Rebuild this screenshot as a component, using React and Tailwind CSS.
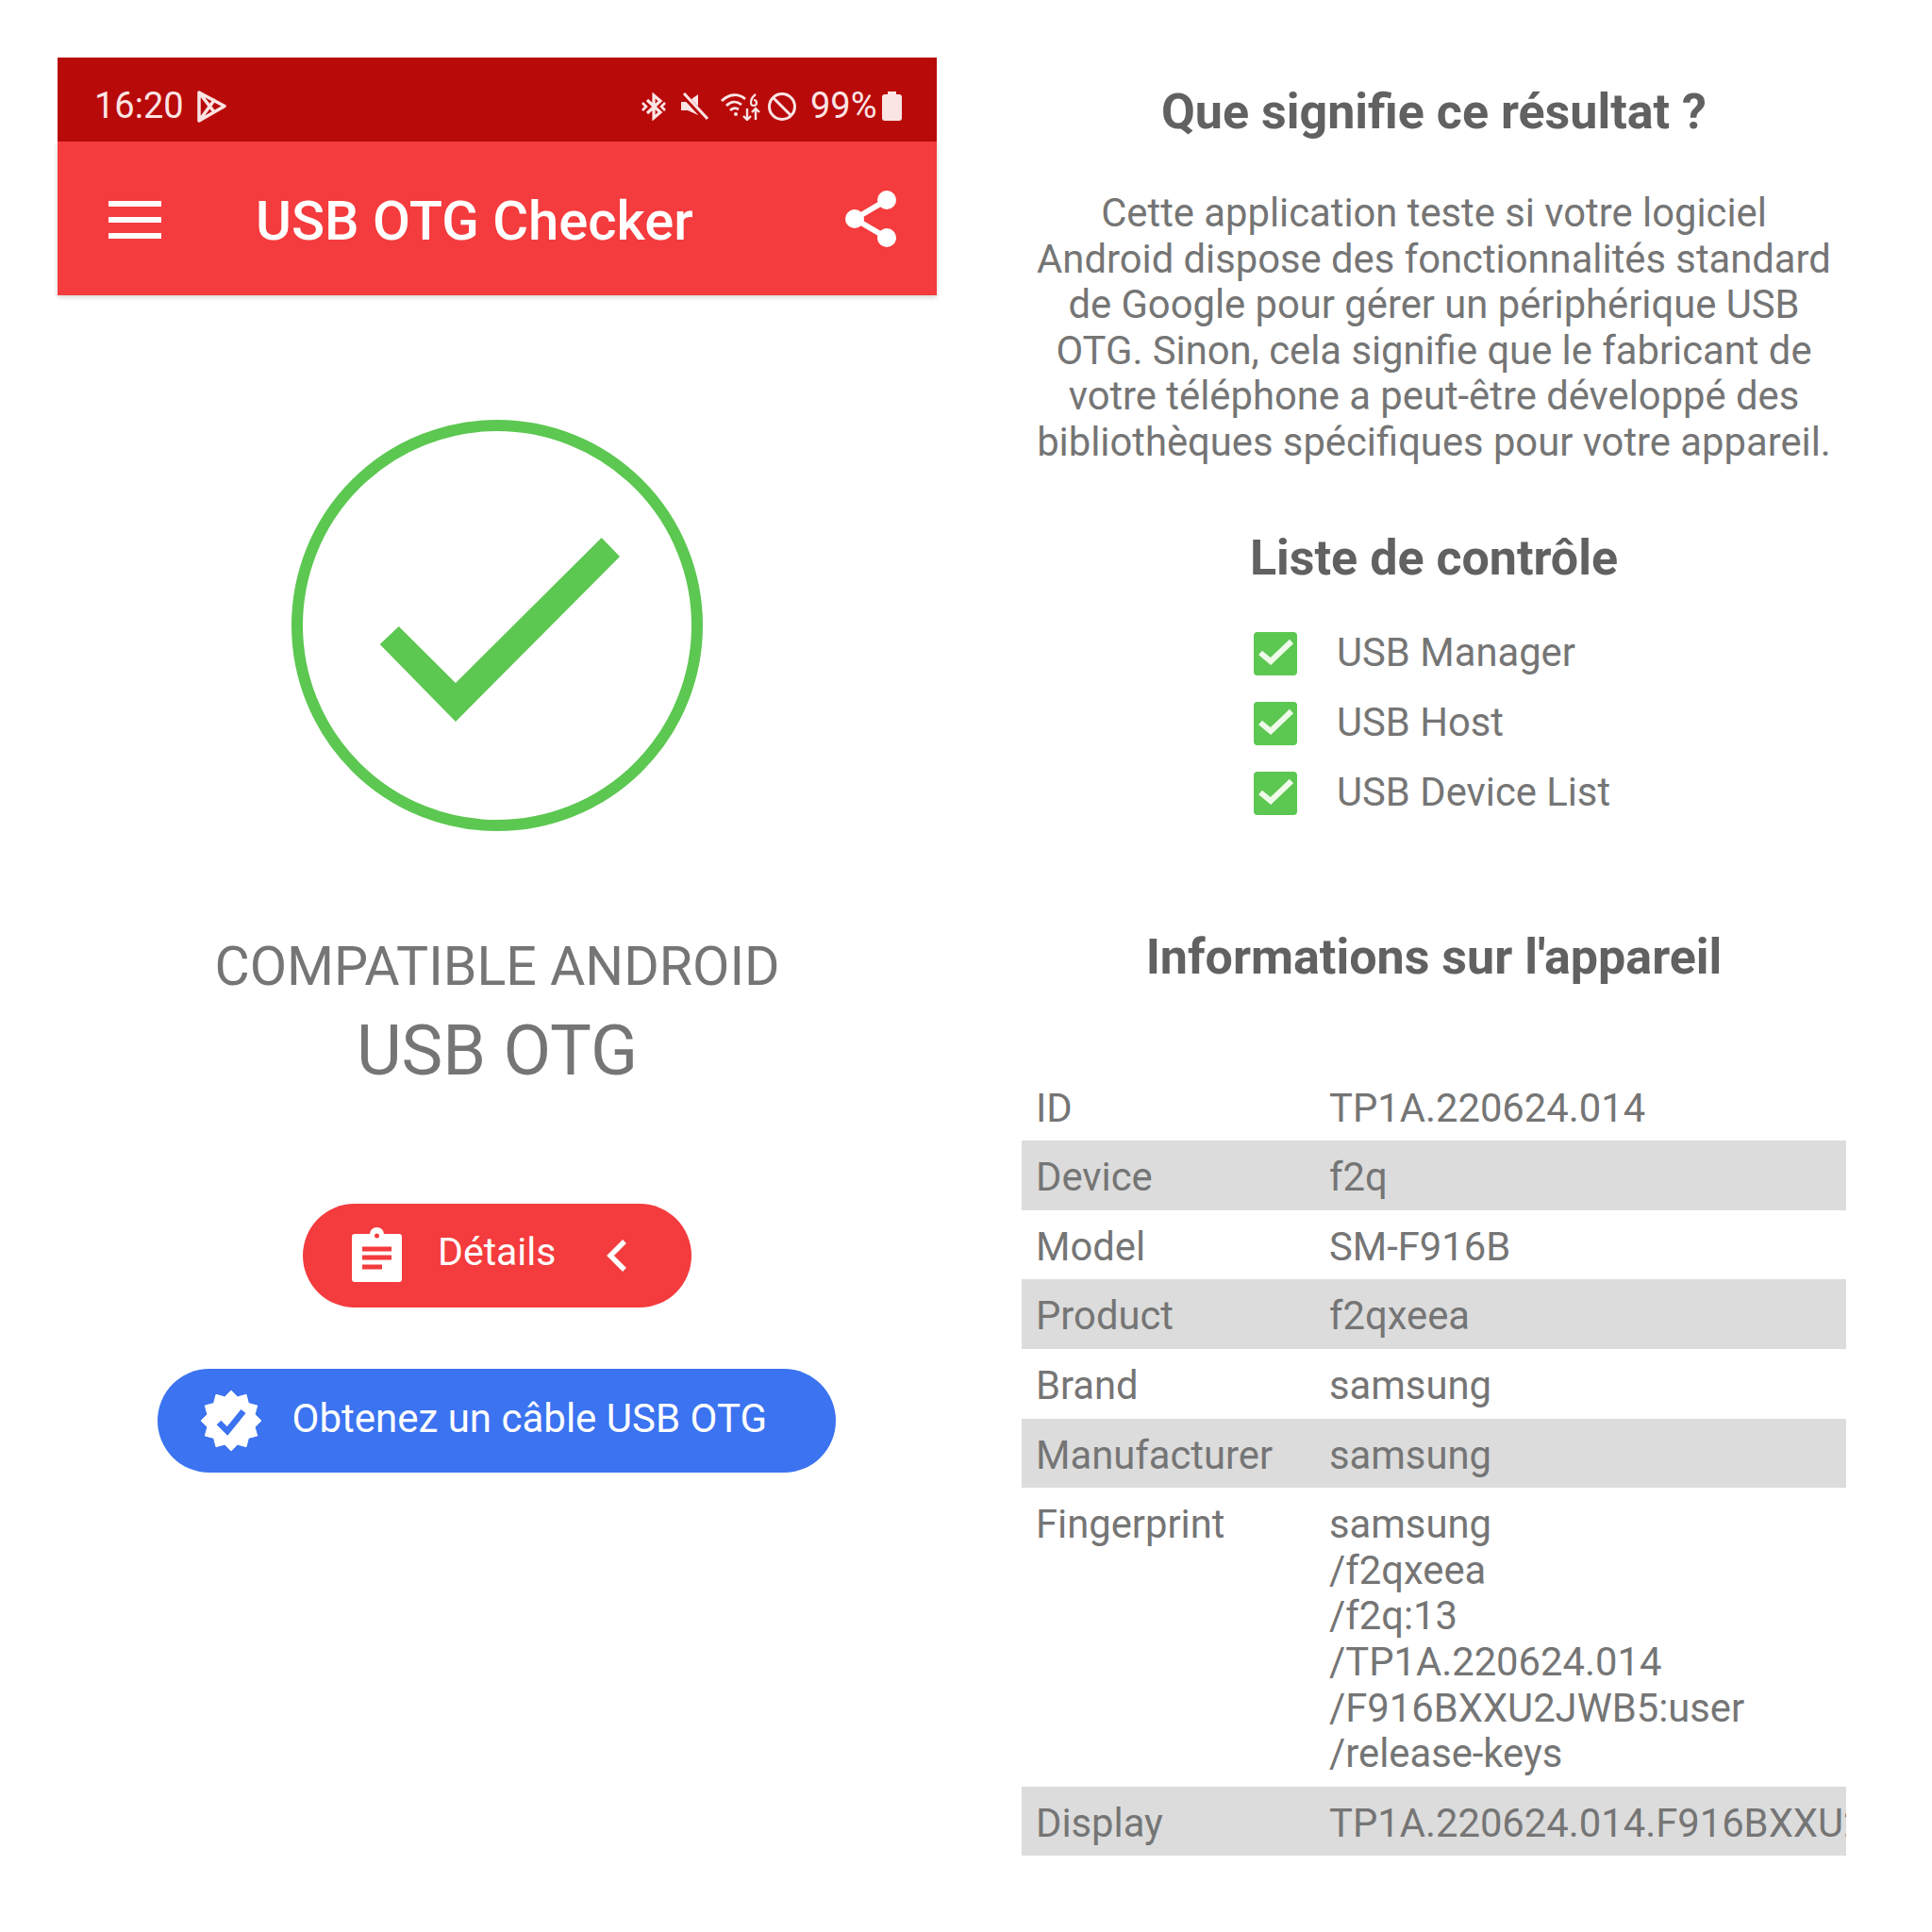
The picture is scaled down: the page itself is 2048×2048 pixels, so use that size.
const F = { fontFamily: 'Roboto, sans-serif' };

function Badge({ className }) {
  const pts = [];
  const n = 12;
  for (let i = 0; i < n * 2; i++) {
    const r = i % 2 === 0 ? 32 : 26;
    const a = (Math.PI * i) / n - Math.PI / 2;
    pts.push(`${(32 + r * Math.cos(a)).toFixed(1)},${(32 + r * Math.sin(a)).toFixed(1)}`);
  }
  return (
    <svg viewBox="0 0 64 64" className={className}>
      <polygon points={pts.join(' ')} fill="#fff" strokeLinejoin="round" stroke="#fff" strokeWidth="1" />
      <path d="M19 34 L28 43 L45 22" fill="none" stroke="#3b73f0" strokeWidth="6.5" />
    </svg>
  );
}

function CheckBox() {
  return (
    <div className="w-[46px] h-[46px] rounded-[4px] bg-[#5cc751] flex items-center justify-center shrink-0">
      <svg viewBox="0 0 46 46" className="w-[46px] h-[46px]">
        <path d="M7 22 L18 31 L40 10" fill="none" stroke="#effbe9" strokeWidth="6" />
      </svg>
    </div>
  );
}

function Row({ label, gray, children }) {
  return (
    <div className={`flex pt-[15px] pb-[10px] leading-[48.6px] text-[41.75px] text-[#757575] overflow-hidden ${gray ? 'bg-[#dcdcdc]' : ''}`}>
      <div className="w-[326px] pl-[15px] shrink-0">{label}</div>
      <div className="whitespace-nowrap">{children}</div>
    </div>
  );
}

export default function App() {
  return (
    <div className="w-[2048px] h-[2048px] bg-white flex" style={F}>
      <div className="w-[932px] ml-[61px] mt-[61px] shrink-0 flex flex-col items-center">
        <div className="w-full h-[89px] bg-[#b90a0a] text-[#fbe4e4] flex items-center pt-[14px] pl-[39px] pr-[37px] text-[38px]">
          <span className="w-[91px]">16:20</span>
          <svg viewBox="0 0 33 35" className="w-[33px] h-[35px] ml-[17px]" fill="none" stroke="#fbe4e4" strokeWidth="3.5" strokeLinejoin="round">
            <path d="M3 3 L30 17.5 L3 33 Z M3 3 L20 25 M3 33 L20 10" />
          </svg>
          <div className="flex-1" />
          <svg viewBox="0 0 26 30" className="w-[26px] h-[30px]" fill="none" stroke="#fbe4e4" strokeWidth="3.2">
            <path d="M6 8 L20 21 L13 27 L13 3 L20 9 L6 22" />
            <path d="M1 11 L5 15 L1 19 M25 11 L21 15 L25 19" strokeWidth="2.6" />
          </svg>
          <svg viewBox="0 0 30 30" className="w-[30px] h-[30px] ml-[15px]">
            <path d="M1 10 H8 L19 2 V24 L8 19 H1 Z" fill="#fbe4e4" />
            <path d="M3 2 L28 29" stroke="#b90a0a" strokeWidth="6" />
            <path d="M4 1 L29 28" stroke="#fbe4e4" strokeWidth="3" />
          </svg>
          <svg viewBox="0 0 42 30" className="w-[42px] h-[30px] ml-[13px]" fill="none" stroke="#fbe4e4" strokeWidth="2.8">
            <path d="M1 9 C9 1 19 1 26 7 M6 14 C11 9 17 9 22 13 M10 19 C13 16 16 16 19 18" />
            <circle cx="16" cy="23" r="2" fill="#fbe4e4" stroke="none" />
            <path d="M28 17 V29 M24 25 L28 29 L32 25 M37 29 V17 M33 21 L37 17 L41 21" strokeWidth="2.4" />
            <path d="M37 2 C33 5 32 8 32 11 A3 3 0 1 0 35 8" strokeWidth="2.2" />
          </svg>
          <svg viewBox="0 0 32 32" className="w-[32px] h-[32px] ml-[7px]" fill="none" stroke="#fbe4e4" strokeWidth="3">
            <circle cx="16" cy="16" r="13.5" />
            <path d="M6.5 6.5 L25.5 25.5" />
          </svg>
          <span className="ml-[14px] w-[69px]">99%</span>
          <div className="relative ml-[7px] w-[21px] h-[28px] mt-[2px] rounded-[3px] bg-[#fbe4e4]">
            <div className="absolute -top-[3px] left-[6px] w-[9px] h-[3px] bg-[#fbe4e4]" />
          </div>
        </div>

        <div className="w-full h-[163px] bg-[#f43b3d] flex items-center text-white shadow-[0_2px_5px_rgba(0,0,0,0.18)]">
          <div className="ml-[54px] mt-[2px] w-[56px] flex flex-col gap-[11px]">
            <div className="h-[6px] bg-white" />
            <div className="h-[6px] bg-white" />
            <div className="h-[6px] bg-white" />
          </div>
          <span className="ml-[100px] mt-[5px] text-[58px] font-medium whitespace-nowrap">USB OTG Checker</span>
          <div className="flex-1" />
          <svg viewBox="0 0 54 60" className="w-[54px] h-[60px] mr-[43px]" fill="#fff">
            <circle cx="44" cy="10" r="10" />
            <circle cx="10" cy="30" r="10" />
            <circle cx="44" cy="50" r="10" />
            <path d="M10 30 L44 10 M10 30 L44 50" stroke="#fff" strokeWidth="6" />
          </svg>
        </div>

        <svg viewBox="0 0 436 436" className="w-[436px] h-[436px] mt-[132px]">
          <circle cx="218" cy="218" r="212" fill="none" stroke="#5cc751" strokeWidth="12" />
          <path d="M93.7 238 L113.7 219 L174 279 L328.7 125 L348 145 L174 320 Z" fill="#5cc751" />
        </svg>

        <div className="mt-[111px] text-[57.25px] leading-[66px] text-[#757575] whitespace-nowrap">COMPATIBLE ANDROID</div>
        <div className="mt-[14px] text-[73.6px] leading-[84px] text-[#757575] whitespace-nowrap">USB OTG</div>

        <div className="mt-[120px] w-[412px] h-[110px] rounded-full bg-[#f43b3d] flex items-center text-white text-[41px]">
          <svg viewBox="0 0 53 58" className="w-[53px] h-[58px] ml-[52px] -mt-[2px]">
            <path d="M3 7 H19 A7.5 7 0 0 1 34 7 H50 A3 3 0 0 1 53 10 V55 A3 3 0 0 1 50 58 H3 A3 3 0 0 1 0 55 V10 A3 3 0 0 1 3 7 Z" fill="#fff" />
            <circle cx="26.5" cy="9" r="2.5" fill="#f43b3d" />
            <path d="M11 22 H42 M11 31 H42 M11 41 H32" stroke="#f43b3d" strokeWidth="5" transform="translate(0 1)" />
          </svg>
          <span className="ml-[38px] -mt-[6px]">Détails</span>
          <svg viewBox="0 0 23 34" className="w-[23px] h-[34px] ml-[53px]" fill="none" stroke="#fff" strokeWidth="5.5">
            <path d="M20 2 L5 17 L20 32" />
          </svg>
        </div>

        <div className="mt-[65px] -ml-[2px] w-[719px] h-[110px] rounded-full bg-[#3b73f0] flex items-center text-white text-[42px]">
          <Badge className="w-[64px] h-[64px] ml-[46px] shrink-0" />
          <span className="ml-[33px] -mt-[6px] whitespace-nowrap">Obtenez un câble USB OTG</span>
        </div>
      </div>

      <div className="w-[874px] ml-[90px] shrink-0 flex flex-col text-[#757575]">
        <h2 className="mt-[91px] text-center text-[52px] leading-[56px] font-bold text-[#616161] whitespace-nowrap">Que signifie ce résultat ?</h2>
        <p className="mt-[55px] text-center text-[41.75px] leading-[48.6px] whitespace-nowrap">
          Cette application teste si votre logiciel<br />
          Android dispose des fonctionnalités standard<br />
          de Google pour gérer un périphérique USB<br />
          OTG. Sinon, cela signifie que le fabricant de<br />
          votre téléphone a peut-être développé des<br />
          bibliothèques spécifiques pour votre appareil.
        </p>
        <h2 className="mt-[70px] text-center text-[52px] leading-[56px] font-bold text-[#616161] whitespace-nowrap">Liste de contrôle</h2>
        <div className="mt-[50px] ml-[246px] flex flex-col gap-[28px]">
          {['USB Manager', 'USB Host', 'USB Device List'].map((t) => (
            <div key={t} className="flex items-center h-[46px]">
              <CheckBox />
              <span className="ml-[42px] text-[41.75px]">{t}</span>
            </div>
          ))}
        </div>
        <h2 className="mt-[123px] text-center text-[52px] leading-[56px] font-bold text-[#616161] whitespace-nowrap">Informations sur l'appareil</h2>
        <div className="mt-[93px] flex flex-col">
          <Row label="ID">TP1A.220624.014</Row>
          <Row label="Device" gray>f2q</Row>
          <Row label="Model">SM-F916B</Row>
          <Row label="Product" gray>f2qxeea</Row>
          <Row label="Brand">samsung</Row>
          <Row label="Manufacturer" gray>samsung</Row>
          <Row label="Fingerprint">
            samsung<br />/f2qxeea<br />/f2q:13<br />/TP1A.220624.014<br />/F916BXXU2JWB5:user<br />/release-keys
          </Row>
          <Row label="Display" gray>TP1A.220624.014.F916BXXU2JWB5</Row>
        </div>
      </div>
    </div>
  );
}
